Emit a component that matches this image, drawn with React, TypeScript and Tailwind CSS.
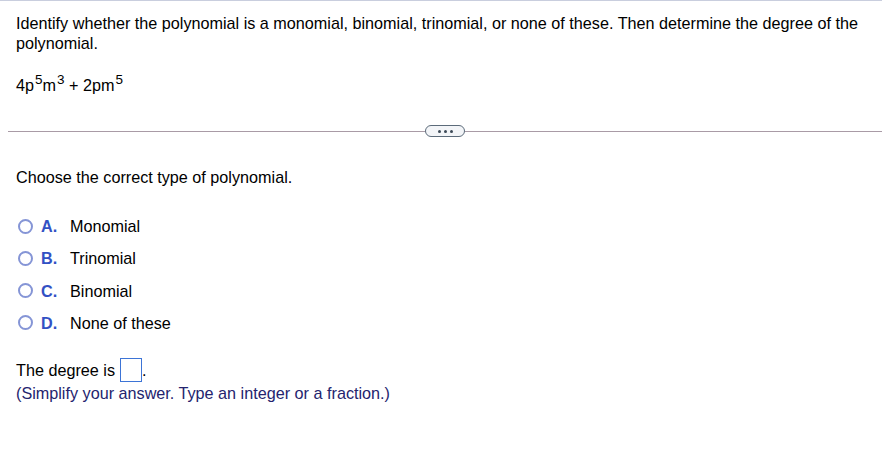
export default function App() {
  const options = [
    { letter: "A.", text: "Monomial" },
    { letter: "B.", text: "Trinomial" },
    { letter: "C.", text: "Binomial" },
    { letter: "D.", text: "None of these" },
  ];

  return (
    <div className="w-[882px] h-[471px] bg-white border-t border-[#c9cede] text-[16.2px] leading-[20px] text-black font-['Liberation_Sans',Arial,sans-serif]">
      <div className="px-4 pt-3">
        <p>
          Identify whether the polynomial is a monomial, binomial, trinomial, or none of these. Then determine the degree of the
          polynomial.
        </p>
        <div className="mt-[22px] leading-[20px]">
          4p<sup className="text-[13.5px] top-[-7px] ml-px">5</sup>m<sup className="text-[13.5px] top-[-7px] ml-px">3</sup> + 2pm
          <sup className="text-[13.5px] top-[-7px] ml-px">5</sup>
        </div>
      </div>

      <div className="mt-[30px] ml-2 flex items-center">
        <div className="flex-1 h-px bg-[#a99ba6]" />
        <button className="w-10 h-[12px] rounded-full border border-[#5c6b7a] bg-[#f3f5f8] flex items-center justify-center gap-[3px]">
          <span className="w-[3px] h-[3px] rounded-full bg-[#3d4a57]" />
          <span className="w-[3px] h-[3px] rounded-full bg-[#3d4a57]" />
          <span className="w-[3px] h-[3px] rounded-full bg-[#3d4a57]" />
        </button>
        <div className="flex-1 h-px bg-[#a99ba6]" />
      </div>

      <div className="px-4">
        <p className="mt-[30px]">Choose the correct type of polynomial.</p>

        <div className="mt-[29px] flex flex-col gap-[12.3px]">
          {options.map((o) => (
            <label key={o.letter} className="flex items-center h-[20px]">
              <span className="w-[15px] h-[15px] rounded-full border-2 border-[#8595d6] ml-[2px]" />
              <span className="ml-[8px] w-[29px] font-bold text-[#3251c4]">{o.letter}</span>
              <span>{o.text}</span>
            </label>
          ))}
        </div>

        <div className="mt-[25px] flex items-center">
          <span>The degree is</span>
          <span className="ml-[5px] w-[22px] h-[24px] border border-[#3d74d6] inline-block" />
          <span>.</span>
        </div>
        <p className="mt-[1px] text-[#24246e]">(Simplify your answer. Type an integer or a fraction.)</p>
      </div>
    </div>
  );
}
